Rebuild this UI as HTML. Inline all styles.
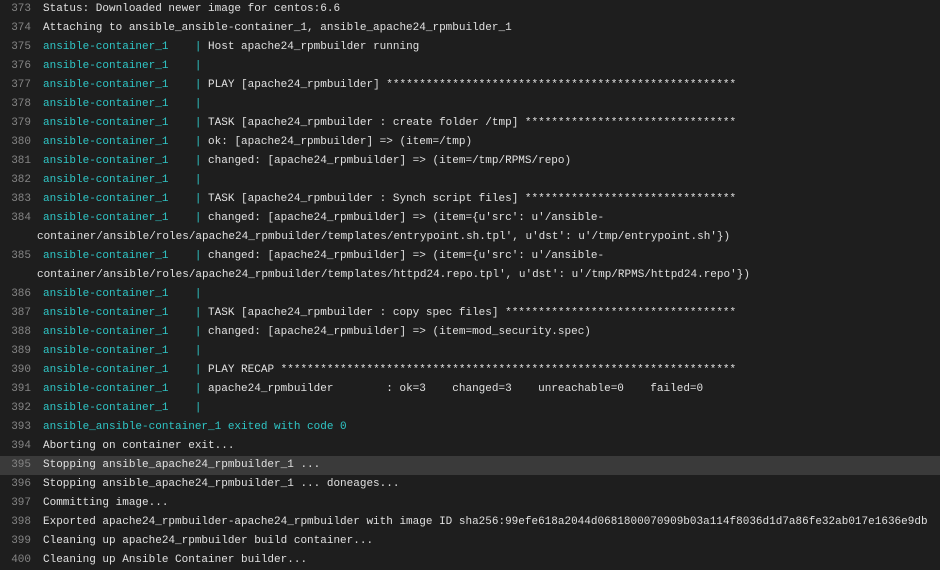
<!DOCTYPE html>
<html><head><meta charset="utf-8"><style>
html,body{margin:0;padding:0;background:#1e1e1e;width:940px;height:570px;overflow:hidden}
.r{position:absolute;left:0;width:940px;height:19px;font-family:"Liberation Mono",monospace;font-size:11px;line-height:19px;white-space:pre;color:#e0e0e0}
.n{position:absolute;right:909px;color:#858585}
.t{position:absolute;left:43px}
.c{color:#2fc6c6}
.w{position:absolute;left:37px}
.hl{background:#3a3a3a}
</style></head><body>
<div class="r" style="top:0"><span class="n">373</span><span class="t">Status: Downloaded newer image for centos:6.6</span></div>
<div class="r" style="top:19px"><span class="n">374</span><span class="t">Attaching to ansible_ansible-container_1, ansible_apache24_rpmbuilder_1</span></div>
<div class="r" style="top:38px"><span class="n">375</span><span class="t"><span class="c">ansible-container_1    |</span> Host apache24_rpmbuilder running</span></div>
<div class="r" style="top:57px"><span class="n">376</span><span class="t"><span class="c">ansible-container_1    |</span></span></div>
<div class="r" style="top:76px"><span class="n">377</span><span class="t"><span class="c">ansible-container_1    |</span> PLAY [apache24_rpmbuilder] *****************************************************</span></div>
<div class="r" style="top:95px"><span class="n">378</span><span class="t"><span class="c">ansible-container_1    |</span></span></div>
<div class="r" style="top:114px"><span class="n">379</span><span class="t"><span class="c">ansible-container_1    |</span> TASK [apache24_rpmbuilder : create folder /tmp] ********************************</span></div>
<div class="r" style="top:133px"><span class="n">380</span><span class="t"><span class="c">ansible-container_1    |</span> ok: [apache24_rpmbuilder] =&gt; (item=/tmp)</span></div>
<div class="r" style="top:152px"><span class="n">381</span><span class="t"><span class="c">ansible-container_1    |</span> changed: [apache24_rpmbuilder] =&gt; (item=/tmp/RPMS/repo)</span></div>
<div class="r" style="top:171px"><span class="n">382</span><span class="t"><span class="c">ansible-container_1    |</span></span></div>
<div class="r" style="top:190px"><span class="n">383</span><span class="t"><span class="c">ansible-container_1    |</span> TASK [apache24_rpmbuilder : Synch script files] ********************************</span></div>
<div class="r" style="top:209px"><span class="n">384</span><span class="t"><span class="c">ansible-container_1    |</span> changed: [apache24_rpmbuilder] =&gt; (item={u'src': u'/ansible-</span></div>
<div class="r" style="top:228px"><span class="w">container/ansible/roles/apache24_rpmbuilder/templates/entrypoint.sh.tpl', u'dst': u'/tmp/entrypoint.sh'})</span></div>
<div class="r" style="top:247px"><span class="n">385</span><span class="t"><span class="c">ansible-container_1    |</span> changed: [apache24_rpmbuilder] =&gt; (item={u'src': u'/ansible-</span></div>
<div class="r" style="top:266px"><span class="w">container/ansible/roles/apache24_rpmbuilder/templates/httpd24.repo.tpl', u'dst': u'/tmp/RPMS/httpd24.repo'})</span></div>
<div class="r" style="top:285px"><span class="n">386</span><span class="t"><span class="c">ansible-container_1    |</span></span></div>
<div class="r" style="top:304px"><span class="n">387</span><span class="t"><span class="c">ansible-container_1    |</span> TASK [apache24_rpmbuilder : copy spec files] ***********************************</span></div>
<div class="r" style="top:323px"><span class="n">388</span><span class="t"><span class="c">ansible-container_1    |</span> changed: [apache24_rpmbuilder] =&gt; (item=mod_security.spec)</span></div>
<div class="r" style="top:342px"><span class="n">389</span><span class="t"><span class="c">ansible-container_1    |</span></span></div>
<div class="r" style="top:361px"><span class="n">390</span><span class="t"><span class="c">ansible-container_1    |</span> PLAY RECAP *********************************************************************</span></div>
<div class="r" style="top:380px"><span class="n">391</span><span class="t"><span class="c">ansible-container_1    |</span> apache24_rpmbuilder        : ok=3    changed=3    unreachable=0    failed=0</span></div>
<div class="r" style="top:399px"><span class="n">392</span><span class="t"><span class="c">ansible-container_1    |</span></span></div>
<div class="r" style="top:418px"><span class="n">393</span><span class="t c">ansible_ansible-container_1 exited with code 0</span></div>
<div class="r" style="top:437px"><span class="n">394</span><span class="t">Aborting on container exit...</span></div>
<div class="r hl" style="top:456px"><span class="n">395</span><span class="t">Stopping ansible_apache24_rpmbuilder_1 ...</span></div>
<div class="r" style="top:475px"><span class="n">396</span><span class="t">Stopping ansible_apache24_rpmbuilder_1 ... doneages...</span></div>
<div class="r" style="top:494px"><span class="n">397</span><span class="t">Committing image...</span></div>
<div class="r" style="top:513px"><span class="n">398</span><span class="t">Exported apache24_rpmbuilder-apache24_rpmbuilder with image ID sha256:99efe618a2044d0681800070909b03a114f8036d1d7a86fe32ab017e1636e9db</span></div>
<div class="r" style="top:532px"><span class="n">399</span><span class="t">Cleaning up apache24_rpmbuilder build container...</span></div>
<div class="r" style="top:551px"><span class="n">400</span><span class="t">Cleaning up Ansible Container builder...</span></div>
</body></html>
